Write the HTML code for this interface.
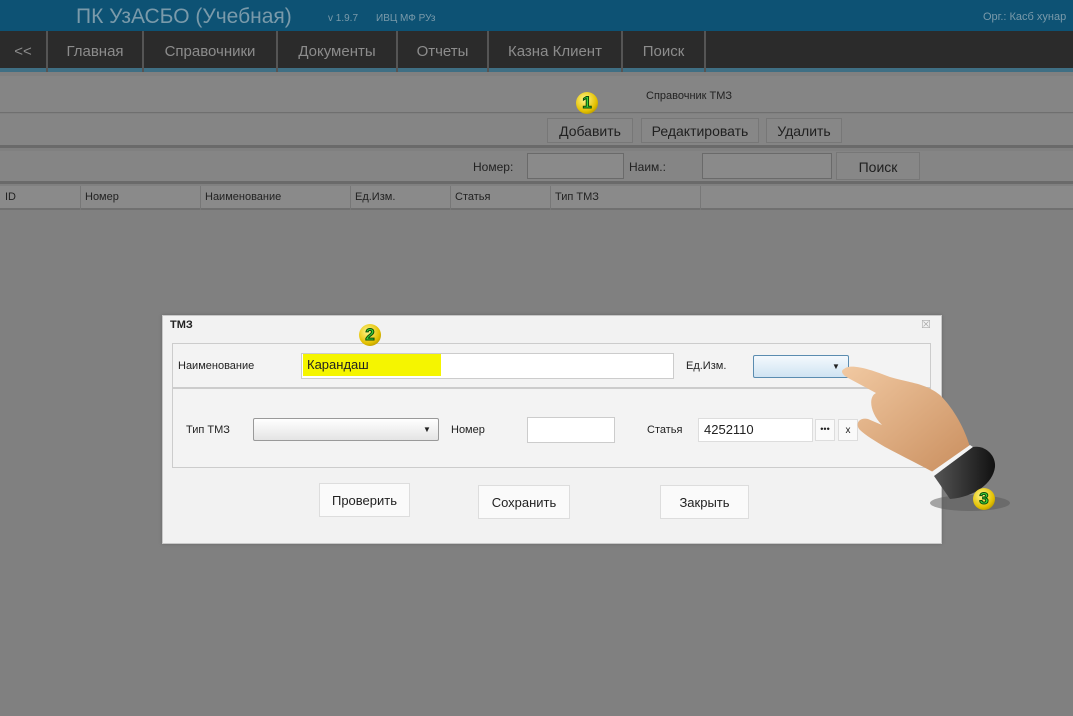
<!DOCTYPE html>
<html><head><meta charset="utf-8"><style>
*{box-sizing:border-box;margin:0;padding:0}
body{width:1073px;height:716px;overflow:hidden;background:#808080;font-family:"Liberation Sans","DejaVu Sans",sans-serif;position:relative;color:#222}
.a{position:absolute}
.top{left:0;top:0;width:1073px;height:31px;background:#0d5274}
.nav{left:0;top:31px;width:1073px;height:41px;background:#2b2b2b;border-bottom:4px solid #3f6f84}
.nav div{position:absolute;top:0;height:41px;line-height:41px;color:#8c8c8c;font-size:15px;text-align:center;border-right:2px solid #555}
.btn{background:#878787;border:1px solid #777;font-size:14px;text-align:center;color:#202020}
.inp{background:#8a8a8a;border:1px solid #6a6a6a}
.th{font-size:11px;color:#222;top:191px}
.dlg{left:162px;top:315px;width:780px;height:229px;background:#f2f2f2;border:1px solid #c8c8c8;box-shadow:0 0 3px #666}
.lbl{font-size:11px;color:#222}
.db{background:#fafafa;border:1px solid #ddd;font-size:13px;text-align:center;color:#222}
.badge{width:22px;height:22px;border-radius:50%;background:radial-gradient(circle at 40% 35%,#fff68a,#e3c000 60%,#8a7000);color:#3cd23c;font-weight:bold;font-size:17px;text-align:center;line-height:22px;-webkit-text-stroke:1px #0a4a0a}
</style></head><body>
<div class="a top"></div>
<div class="a" style="left:76px;top:5px;font-size:21px;color:#7a9aaa">ПК УзАСБО (Учебная)</div>
<div class="a" style="left:328px;top:13px;font-size:10px;color:#7a9aaa">v 1.9.7</div>
<div class="a" style="left:376px;top:13px;font-size:10px;color:#7a9aaa">ИВЦ МФ РУз</div>
<div class="a" style="left:983px;top:11px;font-size:11px;color:#7a9aaa">Орг.: Касб хунар</div>
<div class="a nav">
<div style="left:0;width:48px">&lt;&lt;</div>
<div style="left:48px;width:96px">Главная</div>
<div style="left:144px;width:134px">Справочники</div>
<div style="left:278px;width:120px">Документы</div>
<div style="left:398px;width:91px">Отчеты</div>
<div style="left:489px;width:134px">Казна Клиент</div>
<div style="left:623px;width:83px">Поиск</div>
</div>
<div class="a" style="left:0;top:76px;width:1073px;height:37px;background:#858585;border-bottom:1px solid #6f6f6f"></div>
<div class="a" style="left:646px;top:90px;font-size:11px">Справочник ТМЗ</div>
<div class="a" style="left:0;top:114px;width:1073px;height:34px;background:#858585;border-bottom:3px solid #6a6a6a"></div>
<div class="a btn" style="left:547px;top:118px;width:86px;height:25px;line-height:24px">Добавить</div>
<div class="a btn" style="left:641px;top:118px;width:118px;height:25px;line-height:24px">Редактировать</div>
<div class="a btn" style="left:766px;top:118px;width:76px;height:25px;line-height:24px">Удалить</div>
<div class="a" style="left:0;top:151px;width:1073px;height:33px;background:#858585;border-bottom:3px solid #6a6a6a"></div>
<div class="a" style="left:473px;top:160px;font-size:12px">Номер:</div>
<div class="a inp" style="left:527px;top:153px;width:97px;height:26px"></div>
<div class="a" style="left:629px;top:160px;font-size:12px">Наим.:</div>
<div class="a inp" style="left:702px;top:153px;width:130px;height:26px"></div>
<div class="a btn" style="left:836px;top:152px;width:84px;height:28px;line-height:28px">Поиск</div>
<div class="a" style="left:0;top:186px;width:1073px;height:24px;background:#8a8a8a;border-bottom:2px solid #707070"></div>
<div class="a" style="left:80px;top:186px;width:1px;height:24px;background:#777"></div>
<div class="a" style="left:200px;top:186px;width:1px;height:24px;background:#777"></div>
<div class="a" style="left:350px;top:186px;width:1px;height:24px;background:#777"></div>
<div class="a" style="left:450px;top:186px;width:1px;height:24px;background:#777"></div>
<div class="a" style="left:550px;top:186px;width:1px;height:24px;background:#777"></div>
<div class="a" style="left:700px;top:186px;width:1px;height:24px;background:#777"></div>
<div class="a th" style="left:5px">ID</div>
<div class="a th" style="left:85px">Номер</div>
<div class="a th" style="left:205px">Наименование</div>
<div class="a th" style="left:355px">Ед.Изм.</div>
<div class="a th" style="left:455px">Статья</div>
<div class="a th" style="left:555px">Тип ТМЗ</div>
<div class="a badge" style="left:576px;top:92px">1</div>

<div class="a dlg"></div>
<div class="a" style="left:170px;top:319px;font-size:11px;font-weight:bold">ТМЗ</div>
<div class="a" style="left:921px;top:318px;font-size:11px;color:#aaa">☒</div>
<div class="a" style="left:172px;top:343px;width:759px;height:125px;border:1px solid #ccc;background:#f3f3f3"></div>
<div class="a" style="left:172px;top:387px;width:759px;height:2px;background:#ccc"></div>
<div class="a lbl" style="left:178px;top:360px">Наименование</div>
<div class="a" style="left:301px;top:353px;width:373px;height:26px;background:#fff;border:1px solid #ccc"></div>
<div class="a" style="left:303px;top:354px;width:138px;height:22px;background:#f5f500;font-size:13px;line-height:22px;padding-left:4px">Карандаш</div>
<div class="a lbl" style="left:686px;top:360px">Ед.Изм.</div>
<div class="a" style="left:753px;top:355px;width:96px;height:23px;border:1px solid #5a8cb0;border-radius:2px;background:linear-gradient(#f4f9fd,#cfe3f2)"></div>
<div class="a" style="left:832px;top:362px;font-size:8px">▼</div>
<div class="a lbl" style="left:186px;top:424px">Тип ТМЗ</div>
<div class="a" style="left:253px;top:418px;width:186px;height:23px;border:1px solid #999;border-radius:2px;background:linear-gradient(#fff,#e4e4e4)"></div>
<div class="a" style="left:423px;top:425px;font-size:8px">▼</div>
<div class="a lbl" style="left:451px;top:424px">Номер</div>
<div class="a" style="left:527px;top:417px;width:88px;height:26px;background:#fff;border:1px solid #ccc"></div>
<div class="a lbl" style="left:647px;top:424px">Статья</div>
<div class="a" style="left:698px;top:418px;width:115px;height:24px;background:#fff;border:1px solid #ddd;font-size:13px;line-height:22px;padding-left:5px">4252110</div>
<div class="a" style="left:815px;top:419px;width:20px;height:22px;border:1px solid #ddd;background:#fafafa;font-size:9px;text-align:center;line-height:18px">•••</div>
<div class="a" style="left:838px;top:419px;width:20px;height:22px;border:1px solid #ddd;background:#fafafa;font-size:10px;text-align:center;line-height:22px">x</div>
<div class="a db" style="left:319px;top:483px;width:91px;height:34px;line-height:34px">Проверить</div>
<div class="a db" style="left:478px;top:485px;width:92px;height:34px;line-height:34px">Сохранить</div>
<div class="a db" style="left:660px;top:485px;width:89px;height:34px;line-height:34px">Закрыть</div>
<div class="a badge" style="left:359px;top:324px">2</div>

<svg class="a" style="left:830px;top:355px" width="180" height="160" viewBox="0 0 180 160">
<defs><linearGradient id="sk" x1="0" y1="0" x2="1" y2="1"><stop offset="0" stop-color="#f1c9a2"/><stop offset="1" stop-color="#c98e5e"/></linearGradient>
<linearGradient id="cf" x1="0" y1="0" x2="1" y2="0"><stop offset="0" stop-color="#555"/><stop offset="1" stop-color="#111"/></linearGradient></defs>
<ellipse cx="140" cy="148" rx="40" ry="8" fill="#555" opacity="0.5"/>
<path d="M14 14 C20 8 40 14 60 22 C80 28 95 28 110 40 C125 55 135 75 140 92 L105 118 C90 110 70 100 55 92 C45 86 35 80 30 75 C25 70 28 62 38 64 L52 70 C40 58 38 42 46 38 L20 24 C12 20 10 16 14 14 Z" fill="url(#sk)"/>
<path d="M100 118 L140 90 L143 92 L104 121 Z" fill="#f4f4f4"/>
<path d="M104 121 L143 92 C155 90 166 100 165 112 C163 128 145 142 120 144 Z" fill="url(#cf)"/>
</svg>
<div class="a badge" style="left:973px;top:488px">3</div>
</body></html>
